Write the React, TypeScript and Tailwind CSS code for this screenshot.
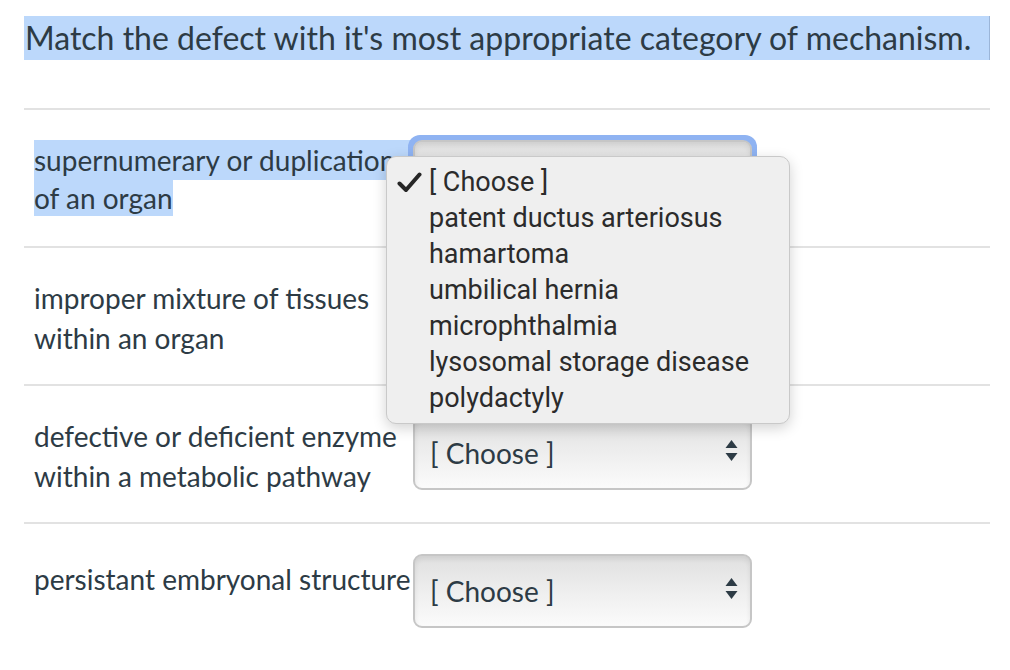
import React from "react";

const rows = [
  { lines: ["supernumerary or duplication", "of an organ"], hl: true },
  { lines: ["improper mixture of tissues", "within an organ"] },
  { lines: ["defective or deficient enzyme", "within a metabolic pathway"] },
  { lines: ["persistant embryonal structure"] },
];

const options = [
  "[ Choose ]",
  "patent ductus arteriosus",
  "hamartoma",
  "umbilical hernia",
  "microphthalmia",
  "lysosomal storage disease",
  "polydactyly",
];

function Arrows() {
  return (
    <svg width="13" height="26" viewBox="0 0 13 26" className="shrink-0">
      <polygon points="6.5,0 12.5,8 0.5,8" fill="#2d3b45" />
      <polygon points="0.5,13 12.5,13 6.5,21" fill="#2d3b45" />
    </svg>
  );
}

function Select({ focused }: { focused?: boolean }) {
  return (
    <div className={"relative z-10 " + (focused ? "rounded-[12px] bg-[#8fb3f2] p-[5px] -m-[5px]" : "")}>
      <div className="flex h-[74px] w-[339px] items-center justify-between rounded-[9px] border-2 border-[#c6c6c6] bg-gradient-to-b from-[#e0e0e0] via-[#eeeeee] to-[#fbfbfb] pl-[15px] pr-[12px] shadow-[inset_0_3px_5px_rgba(0,0,0,0.08)]">
        <span className="text-[28px] leading-none text-[#2d3b45]">[ Choose ]</span>
        <Arrows />
      </div>
    </div>
  );
}

export default function App() {
  return (
    <div
      className="relative h-[670px] w-[1010px] overflow-hidden bg-white text-[#2d3b45]"
      style={{ fontFamily: "Lato, 'Noto Sans', sans-serif" }}
    >
      <div className="pl-[24px] pr-[20px] pt-[16px]">
        <div className="flex h-[44px] w-[966px] items-center border-r border-[#9bb5d8] bg-[#bcd8fb] pl-[1px] text-[32px] leading-none">
          Match the defect with it's most appropriate category of mechanism.
        </div>
        <div className="mt-[48px] w-[966px]">
          {rows.map((r, i) => (
            <div
              key={i}
              className="flex h-[138px] items-start border-t-2 border-[#e2e2e2] pl-[10px] pt-[30px]"
            >
              <div
                className={
                  "w-[379px] shrink-0 whitespace-nowrap text-[28px] leading-[40px] " +
                  (r.lines.length === 1 ? "mt-[5px]" : "")
                }
              >
                {r.lines.map((l, j) => (
                  <div key={j} className="h-[40px]">
                    {r.hl ? (
                      <span
                        className={
                          "inline-block bg-[#bcd8fb] align-top " +
                          (j === 0 ? "w-[376px] leading-[40px]" : "leading-[36px]")
                        }
                      >
                        {l}
                      </span>
                    ) : (
                      l
                    )}
                  </div>
                ))}
              </div>
              <Select focused={i === 0} />
            </div>
          ))}
        </div>
      </div>

      <div
        className="absolute left-[386px] top-[156px] z-20 h-[268px] w-[404px] rounded-[10px] border border-[#c9c9c9] bg-[#efefef] pt-[7px] shadow-[0_4px_14px_rgba(0,0,0,0.18)]"
        style={{ fontFamily: "Roboto, 'Noto Sans', sans-serif" }}
      >
        {options.map((o, i) => (
          <div key={i} className="relative flex h-[36px] items-center pl-[42px] text-[27px] text-[#2b2b2b]">
            {i === 0 && (
              <svg
                width="25"
                height="21"
                viewBox="0 0 25 21"
                className="absolute left-[10px] top-[8px]"
              >
                <path d="M2.5 11.5 L9 18 L22.5 2.5" fill="none" stroke="#262626" strokeWidth="4" strokeLinecap="round" strokeLinejoin="round" />
              </svg>
            )}
            {o}
          </div>
        ))}
      </div>
    </div>
  );
}
